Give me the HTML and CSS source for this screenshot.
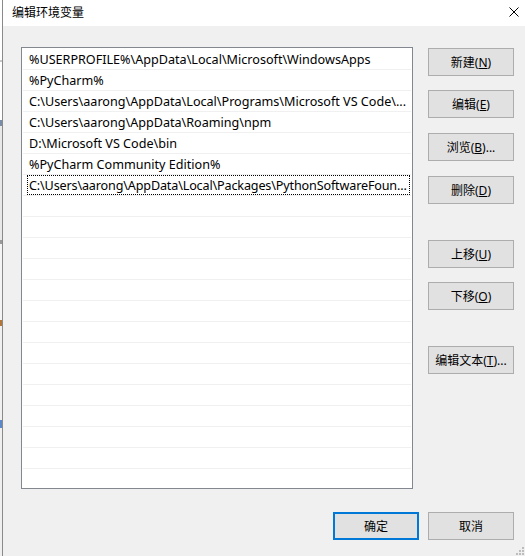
FILE: index.html
```html
<!DOCTYPE html>
<html lang="zh-CN">
<head>
<meta charset="utf-8">
<title>编辑环境变量</title>
<link rel="stylesheet" href="styles.css">
</head>
<body>
<div class="edge"></div>
<div class="dialog">
  <div class="titlebar">
    <span class="title">编辑环境变量</span>
    <svg class="close" width="10" height="10" viewBox="0 0 10 10"><path d="M0.5 0.5 L9.5 9.5 M9.5 0.5 L0.5 9.5" stroke="#000" stroke-width="1" fill="none"/></svg>
  </div>
  <div class="main">
    <div class="list">
      <div class="row"><span class="txt">%USERPROFILE%\AppData\Local\Microsoft\WindowsApps</span></div>
      <div class="row"><span class="txt">%PyCharm%</span></div>
      <div class="row"><span class="txt">C:\Users\aarong\AppData\Local\Programs\Microsoft VS Code\...</span></div>
      <div class="row"><span class="txt">C:\Users\aarong\AppData\Roaming\npm</span></div>
      <div class="row"><span class="txt">D:\Microsoft VS Code\bin</span></div>
      <div class="row"><span class="txt">%PyCharm Community Edition%</span></div>
      <div class="row focus"><span class="txt">C:\Users\aarong\AppData\Local\Packages\PythonSoftwareFoun...</span></div>
      <div class="row"></div><div class="row"></div><div class="row"></div><div class="row"></div>
      <div class="row"></div><div class="row"></div><div class="row"></div><div class="row"></div>
      <div class="row"></div><div class="row"></div><div class="row"></div><div class="row"></div>
      <div class="row"></div><div class="row"></div>
    </div>
    <div class="buttons">
      <button class="btn">新建(<u>N</u>)</button>
      <button class="btn g14">编辑(<u>E</u>)</button>
      <button class="btn g15">浏览(<u>B</u>)...</button>
      <button class="btn g15">删除(<u>D</u>)</button>
      <button class="btn g36">上移(<u>U</u>)</button>
      <button class="btn g14">下移(<u>O</u>)</button>
      <button class="btn g36">编辑文本(<u>T</u>)...</button>
    </div>
  </div>
  <div class="footer">
    <button class="btn default">确定</button>
    <button class="btn">取消</button>
  </div>
  <svg class="grip" width="8" height="8" viewBox="0 0 8 8">
    <rect x="6" y="0" width="2" height="2" fill="#bdbdbd"/>
    <rect x="3" y="3" width="2" height="2" fill="#bdbdbd"/>
    <rect x="6" y="3" width="2" height="2" fill="#bdbdbd"/>
    <rect x="0" y="6" width="2" height="2" fill="#bdbdbd"/>
    <rect x="3" y="6" width="2" height="2" fill="#bdbdbd"/>
    <rect x="6" y="6" width="2" height="2" fill="#bdbdbd"/>
  </svg>
</div>
</body>
</html>
```

FILE: styles.css
```css
html, body {
  margin: 0;
  padding: 0;
}
body {
  width: 525px;
  height: 556px;
  overflow: hidden;
  display: flex;
  font-family: "Noto Sans", "Noto Sans CJK SC", sans-serif;
  font-size: 12px;
  color: #000;
}
.edge {
  width: 2px;
  flex: none;
  border-right: 1px solid #8a8a8a;
  background: linear-gradient(to bottom, #ffffff 0 60px, #c8c8c8 60px 62px, #ffffff 62px 120px, #7a8da8 120px 126px, #e8e8e8 126px 240px, #9a9a9a 240px 244px, #f4f4f4 244px 320px, #b0763a 320px 326px, #f0f0f0 326px 420px, #5a88c8 420px 428px, #efefef 428px);
}
.dialog {
  flex: 1;
  position: relative;
  display: flex;
  flex-direction: column;
  background: #f0f0f0;
}
.titlebar {
  box-sizing: border-box;
  height: 26px;
  flex: none;
  background: #fff;
  display: flex;
  align-items: center;
  justify-content: space-between;
  padding: 0 6px 3px 9px;
}
.title {
  font-family: "Noto Sans CJK SC", sans-serif;
  font-size: 12px;
}
.close {
  display: block;
}
.main {
  display: flex;
  margin: 21px 0 0 18px;
}
.list {
  box-sizing: border-box;
  width: 392px;
  height: 442px;
  border: 1px solid #828790;
  background: #fff;
  padding: 1px 1px 0 1px;
  overflow: hidden;
  font-size: 12.6px;
}
.row {
  box-sizing: border-box;
  height: 21px;
  border-bottom: 1px solid #f0f0f0;
  padding-left: 4px;
  display: flex;
  align-items: stretch;
}
.txt {
  white-space: nowrap;
  padding: 1px 0 0 2px;
  line-height: 19px;
}
.row.focus .txt {
  flex: 1;
  min-width: 0;
  overflow: hidden;
  letter-spacing: -0.15px;
  outline: 1px dotted #000;
  outline-offset: -1px;
  margin-right: 1px;
}
.buttons {
  display: flex;
  flex-direction: column;
  margin-left: 15px;
  padding-top: 1px;
}
.btn {
  box-sizing: border-box;
  width: 86px;
  height: 28px;
  background: #e1e1e1;
  border: 1px solid #adadad;
  border-radius: 0;
  padding: 0;
  margin: 0;
  font-family: "Noto Sans", "Noto Sans CJK SC", sans-serif;
  font-size: 12px;
  color: #000;
}
.g14 { margin-top: 14px; }
.g15 { margin-top: 15px; }
.g36 { margin-top: 36px; }
.footer {
  display: flex;
  justify-content: flex-end;
  gap: 9px;
  margin: 23px 11px 0 0;
}
.btn.default {
  border: 2px solid #0078d7;
}
.grip {
  position: absolute;
  right: 1px;
  bottom: 1px;
}
```
